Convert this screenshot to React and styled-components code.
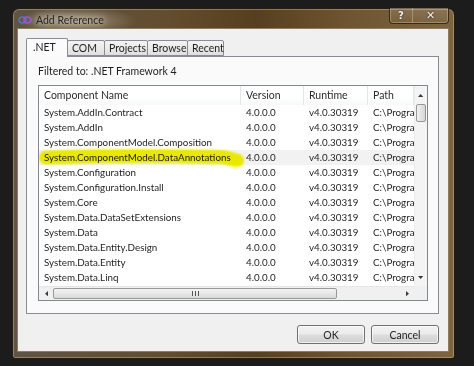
import React from 'react';
import styled, { createGlobalStyle } from 'styled-components';

const Global = createGlobalStyle`
  html, body { margin: 0; padding: 0; background: #1c1c1c; }
  body { font-family: Lato, "Noto Sans", "Liberation Sans", sans-serif; }
  #root { width: 474px; height: 366px; }
`;

const Page = styled.div`
  width: 474px;
  height: 366px;
  box-sizing: border-box;
  padding: 8px 19px 7px 12px;
  background: #1c1c1c;
  display: flex;
`;

const Window = styled.div`
  position: relative;
  flex: 1;
  display: flex;
  flex-direction: column;
  box-sizing: border-box;
  padding: 0 5px 6px 4px;
  border: 1px solid #241d13;
  border-radius: 7px 7px 3px 3px;
  background:
    radial-gradient(ellipse 60px 14px at 64px 12px, rgba(230, 220, 200, 0.45), rgba(0,0,0,0) 100%),
    linear-gradient(90deg, #5e5546 0%, #634d2f 35%, #563f20 55%, #6e5430 75%, #7d6442 100%);
  box-shadow: inset 0 0 0 1px rgba(230, 200, 150, 0.4);
`;

const TitleBar = styled.div`
  height: 21px;
  display: flex;
  align-items: center;
  gap: 4px;
  padding-left: 1px;
`;

const AppIcon = styled.svg`
  width: 14px;
  height: 8px;
  margin-top: 3px;
`;

const Title = styled.span`
  font-size: 10.5px;
  color: #2a2520;
  margin-top: 2px;
  text-shadow: 0 0 6px rgba(255, 250, 235, 0.9), 0 0 10px rgba(255, 250, 235, 0.6);
`;

const CaptionGroup = styled.div`
  position: absolute;
  top: -1px;
  right: 5px;
  display: flex;
  border: 1px solid rgba(40, 30, 15, 0.8);
  border-top: none;
  border-radius: 0 0 4px 4px;
  overflow: hidden;
  box-shadow: inset 0 0 0 1px rgba(255, 235, 200, 0.28);
`;

const CaptionButton = styled.div`
  width: ${p => p.$w}px;
  height: 15px;
  display: flex;
  align-items: center;
  justify-content: center;
  font-family: "DejaVu Sans", sans-serif;
  font-weight: bold;
  font-size: ${p => p.$fs}px;
  color: #f4f0ea;
  text-shadow: 0 0 2px rgba(0,0,0,0.7);
  background: linear-gradient(180deg, rgba(255,255,255,0.12), rgba(255,255,255,0.02));
  & + & { border-left: 1px solid rgba(255, 235, 200, 0.3); }
`;

const Client = styled.div`
  flex: 1;
  display: flex;
  flex-direction: column;
  background: #f0f0f0;
  border: 1px solid #8e7c5e;
  padding: 9px 9px 7px 8px;
  box-sizing: border-box;
`;

const TabRow = styled.div`
  display: flex;
  align-items: flex-end;
  height: 18px;
  position: relative;
  z-index: 1;
`;

const Tab = styled.div`
  box-sizing: border-box;
  width: ${p => p.$w}px;
  height: ${p => (p.$active ? 19 : 16)}px;
  margin-bottom: ${p => (p.$active ? -1 : 0)}px;
  margin-left: ${p => (p.$first ? 0 : -1)}px;
  border: 1px solid #898c95;
  border-bottom: ${p => (p.$active ? 'none' : '1px solid #898c95')};
  border-radius: 2px 2px 0 0;
  background: ${p => (p.$active ? '#fbfbfb' : 'linear-gradient(180deg, #f3f3f3 0%, #ebebeb 50%, #dedede 100%)')};
  font-size: 10.5px;
  color: #1e1e1e;
  padding: ${p => (p.$active ? '1px 0 0 6px' : '0 0 0 4px')};
  line-height: 14px;
  white-space: nowrap;
  position: relative;
  z-index: ${p => (p.$active ? 2 : 1)};
`;

const Panel = styled.div`
  height: 258px;
  box-sizing: border-box;
  border: 1px solid #898c95;
  background: #fafafa;
  padding: 7px 10px 12px 11px;
  display: flex;
  flex-direction: column;
`;

const FilterLabel = styled.div`
  font-size: 10.5px;
  color: #1e1e1e;
  height: 14px;
  line-height: 14px;
  margin-bottom: 7px;
`;

const ListView = styled.div`
  position: relative;
  height: 216px;
  box-sizing: border-box;
  border: 1px solid #828790;
  background: #ffffff;
  display: grid;
  grid-template-columns: 1fr 13px;
  grid-template-rows: 1fr 14px;
`;

const Table = styled.div`
  overflow: hidden;
  display: grid;
  grid-template-columns: 202px 63px 64px 46px;
  grid-auto-rows: 15px;
  grid-template-rows: 19px;
  font-size: 9.8px;
  color: #1e1e1e;
`;

const HeaderCell = styled.div`
  padding-left: 5px;
  font-size: 10.5px;
  line-height: 19px;
  color: #2c2c2c;
  border-right: 1px solid #e3e6ea;
  background: linear-gradient(180deg, #ffffff 0%, #ffffff 60%, #f7f8f9 100%);
  white-space: nowrap;
  overflow: hidden;
`;

const Cell = styled.div`
  padding-left: 5px;
  line-height: 15px;
  white-space: nowrap;
  overflow: hidden;
  background: ${p => (p.$hot ? '#f2f2f2' : 'transparent')};
`;

const VScroll = styled.div`
  display: flex;
  flex-direction: column;
  align-items: stretch;
  background: #f4f4f4;
  border-left: 1px solid #ececec;
`;

const ArrowBox = styled.div`
  height: ${p => p.$h}px;
  width: ${p => (p.$w ? `${p.$w}px` : 'auto')};
  display: flex;
  align-items: center;
  justify-content: center;
`;

const VThumb = styled.div`
  height: 16px;
  margin: 0 1px;
  border: 1px solid #979797;
  border-radius: 2px;
  background: linear-gradient(90deg, #f2f2f2 0%, #e4e4e4 50%, #d6d6d6 100%);
`;

const Track = styled.div`
  flex: 1;
`;

const HScroll = styled.div`
  display: flex;
  align-items: stretch;
  background: #f0f0f0;
  border-top: 1px solid #e6e6e6;
`;

const HThumb = styled.div`
  width: 282px;
  margin: 1px 0;
  border: 1px solid #999999;
  border-radius: 2px;
  background: linear-gradient(180deg, #f3f3f3 0%, #e8e8e8 50%, #d9d9d9 100%);
  display: flex;
  align-items: center;
  justify-content: center;
`;

const Corner = styled.div`
  background: #f0f0f0;
`;

const Footer = styled.div`
  display: flex;
  justify-content: flex-end;
  gap: 6px;
  margin-top: 11px;
`;

const Button = styled.div`
  width: 68px;
  height: 19px;
  box-sizing: border-box;
  border: 1px solid #707070;
  border-radius: 3px;
  background: linear-gradient(180deg, #f2f2f2 0%, #ebebeb 48%, #dddddd 52%, #cfcfcf 100%);
  box-shadow: inset 0 0 0 1px rgba(255,255,255,0.7);
  display: flex;
  align-items: center;
  justify-content: center;
  font-size: 10.5px;
  color: #1e1e1e;
`;

const Highlight = styled.svg`
  position: absolute;
  left: 0;
  top: 0;
  width: 260px;
  height: 90px;
  pointer-events: none;
  mix-blend-mode: multiply;
`;

const Tri = ({ dir }) => {
  const pts = {
    up: '0,4 3.5,0 7,4',
    down: '0,0 7,0 3.5,4',
    left: '4,0 4,7 0,3.5',
    right: '0,0 0,7 4,3.5',
  }[dir];
  const w = dir === 'up' || dir === 'down' ? 7 : 4;
  const h = dir === 'up' || dir === 'down' ? 4 : 7;
  return (
    <svg width={w * 0.75} height={h * 0.75} viewBox={`0 0 ${w} ${h}`}>
      <polygon points={pts} fill="#3a3a3a" />
    </svg>
  );
};

const names = [
  'System.AddIn.Contract',
  'System.AddIn',
  'System.ComponentModel.Composition',
  'System.ComponentModel.DataAnnotations',
  'System.Configuration',
  'System.Configuration.Install',
  'System.Core',
  'System.Data.DataSetExtensions',
  'System.Data',
  'System.Data.Entity.Design',
  'System.Data.Entity',
  'System.Data.Linq',
];

const tabs = [
  { label: '.NET', w: 42, active: true },
  { label: 'COM', w: 38 },
  { label: 'Projects', w: 44 },
  { label: 'Browse', w: 41 },
  { label: 'Recent', w: 37 },
];

export default function App() {
  return (
    <>
      <Global />
      <Page>
        <Window>
          <TitleBar>
            <AppIcon viewBox="0 0 14 8">
              <ellipse cx="4.5" cy="4" rx="3.5" ry="3" fill="none" stroke="#5a6fd0" strokeWidth="1.6" />
              <ellipse cx="9.5" cy="4" rx="3.5" ry="3" fill="none" stroke="#9a58c8" strokeWidth="1.6" />
            </AppIcon>
            <Title>Add Reference</Title>
          </TitleBar>
          <CaptionGroup>
            <CaptionButton $w={22} $fs={10}>?</CaptionButton>
            <CaptionButton $w={35} $fs={11}>✕</CaptionButton>
          </CaptionGroup>
          <Client>
            <TabRow>
              {tabs.map((t, i) => (
                <Tab key={t.label} $w={t.w} $active={t.active} $first={i === 0}>
                  {t.label}
                </Tab>
              ))}
            </TabRow>
            <Panel>
              <FilterLabel>Filtered to: .NET Framework 4</FilterLabel>
              <ListView>
                <Table>
                  <HeaderCell>Component Name</HeaderCell>
                  <HeaderCell>Version</HeaderCell>
                  <HeaderCell>Runtime</HeaderCell>
                  <HeaderCell>Path</HeaderCell>
                  {names.map((n, i) => (
                    <React.Fragment key={n}>
                      <Cell $hot={i === 3}>{n}</Cell>
                      <Cell $hot={i === 3}>4.0.0.0</Cell>
                      <Cell $hot={i === 3}>v4.0.30319</Cell>
                      <Cell $hot={i === 3}>C:\Progra</Cell>
                    </React.Fragment>
                  ))}
                </Table>
                <VScroll>
                  <ArrowBox $h={18}><Tri dir="up" /></ArrowBox>
                  <VThumb />
                  <Track />
                  <ArrowBox $h={18}><Tri dir="down" /></ArrowBox>
                </VScroll>
                <HScroll>
                  <ArrowBox $h={13} $w={14}><Tri dir="left" /></ArrowBox>
                  <HThumb>
                    <svg width="7" height="5" viewBox="0 0 7 5">
                      <path d="M0.5 0v5M3.5 0v5M6.5 0v5" stroke="#555" strokeWidth="1" />
                    </svg>
                  </HThumb>
                  <Track />
                  <ArrowBox $h={13} $w={14}><Tri dir="right" /></ArrowBox>
                </HScroll>
                <Corner />
                <Highlight viewBox="0 0 260 90">
                  <defs>
                    <filter id="soft" filterUnits="userSpaceOnUse" x="0" y="0" width="260" height="90">
                      <feGaussianBlur stdDeviation="1.1" />
                    </filter>
                  </defs>
                  <path
                    d="M7 71.5 C 60 70, 140 70, 183 71 C 192 72, 194 74.5, 198 74.5"
                    stroke="#f5f500"
                    strokeWidth="14"
                    strokeLinecap="round"
                    fill="none"
                    filter="url(#soft)"
                  />
                </Highlight>
              </ListView>
            </Panel>
            <Footer>
              <Button>OK</Button>
              <Button>Cancel</Button>
            </Footer>
          </Client>
        </Window>
      </Page>
    </>
  );
}
